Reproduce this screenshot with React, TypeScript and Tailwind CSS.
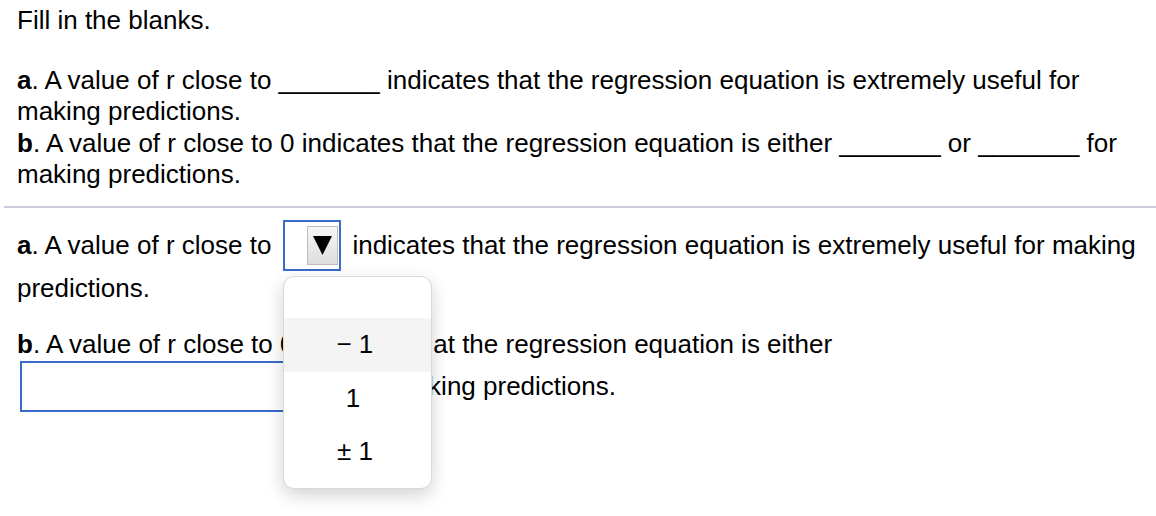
import React from "react";

export default function App() {
  return (
    <div
      className="relative w-[1156px] h-[516px] bg-white text-black overflow-hidden"
      style={{ fontFamily: '"Liberation Sans", Arial, Helvetica, sans-serif' }}
    >
      {/* Question */}
      <div className="pl-[17px] pt-[5px] text-[26px] leading-[31.5px]">
        <div className="mb-[28px]">Fill in the blanks.</div>
        <div className="whitespace-pre">
          <b>a</b>. A value of r close to _______ indicates that the regression equation is extremely useful for
        </div>
        <div>making predictions.</div>
        <div className="whitespace-pre">
          <b>b</b>. A value of r close to 0 indicates that the regression equation is either _______ or _______ for
        </div>
        <div>making predictions.</div>
      </div>

      <div className="ml-[4px] mt-[15px] h-[2px] bg-[#c9ccdb]" />

      {/* Answer */}
      <div className="pl-[17px] pt-[16px] text-[26px]">
        <div className="flex items-center h-[43px] whitespace-pre">
          <span>
            <b>a</b>. A value of r close to
          </span>
          <div className="relative ml-[12px] w-[58px] h-[51px] shrink-0 border-2 border-[#3a6bc9] bg-white flex items-center justify-end pr-[1px]">
            <div className="w-[31px] h-[39px] border border-[#bdbdbd] bg-gradient-to-b from-[#f7f7f7] to-[#dedede] flex items-center justify-center">
              <svg width="19" height="20" viewBox="0 0 19 20">
                <polygon points="0,1 19,1 9.5,20" fill="#000" />
              </svg>
            </div>
            {/* open menu */}
            <div className="absolute left-[-2px] top-[54px] w-[149px] z-10 rounded-[11px] border border-[#d9d9d9] bg-white shadow-[0_6px_18px_rgba(0,0,0,0.18)] pb-[10px] overflow-hidden">
              <div className="h-[41px]" />
              <div className="h-[54px] bg-[#f4f4f4] flex items-center justify-center pr-[6px]">− 1</div>
              <div className="h-[53px] flex items-center justify-center pr-[10px]">1</div>
              <div className="h-[53px] flex items-center justify-center pr-[6px]">± 1</div>
            </div>
          </div>
          <span className="ml-[11px]">indicates that the regression equation is extremely useful for making</span>
        </div>
        <div className="flex items-center h-[43px]">predictions.</div>

        <div className="flex items-center h-[42px] mt-[14px] whitespace-pre">
          <span>
            <b>b</b>. A value of r close to 0 indicates that the regression equation is either
          </span>
        </div>
        <div className="flex items-center h-[42px] whitespace-pre">
          <div className="ml-[3px] w-[360px] h-[51px] shrink-0 border-2 border-[#3a6bc9] bg-white" />
          <span className="ml-[12px]">making predictions.</span>
        </div>
      </div>
    </div>
  );
}
